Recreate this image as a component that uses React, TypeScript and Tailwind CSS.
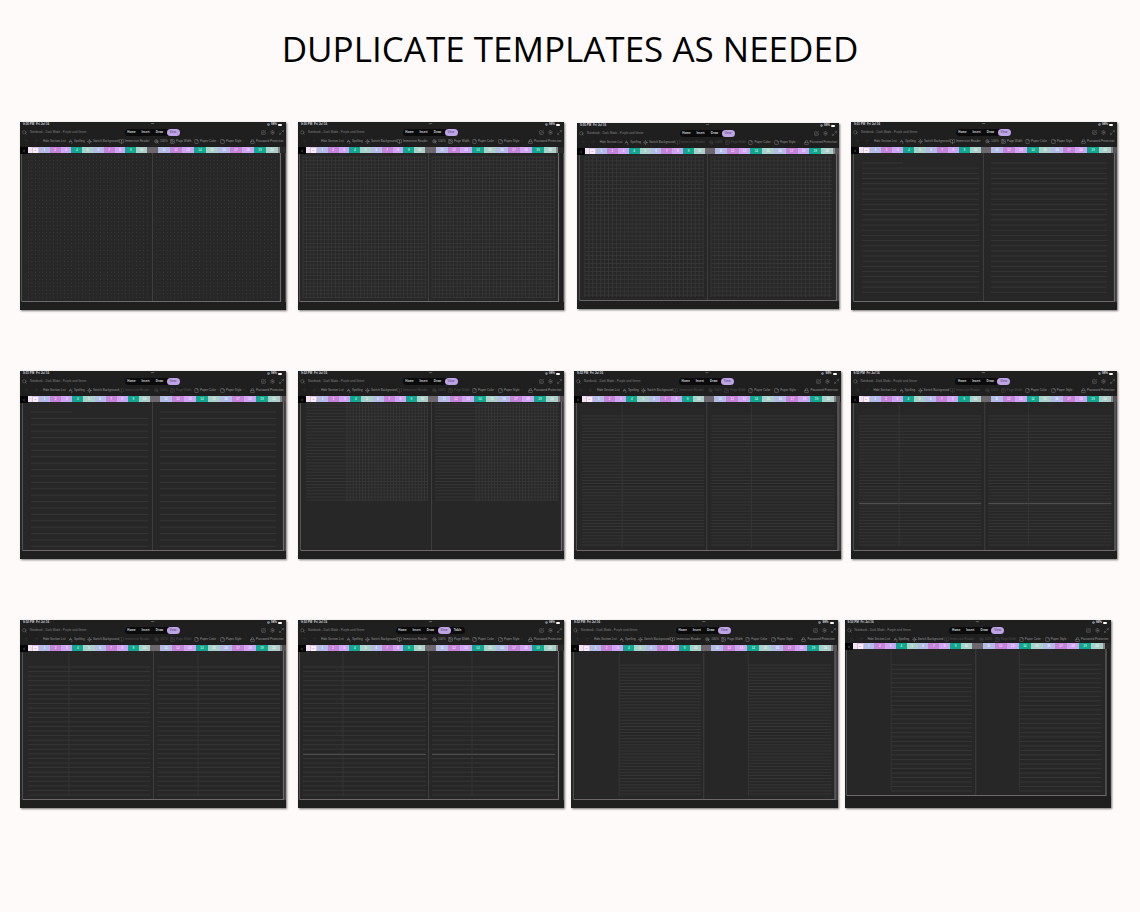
import {
  BookOpen,
  ChevronDown,
  ChevronLeft,
  File,
  Image,
  Lock,
  Maximize2,
  Redo2,
  Search,
  Settings,
  SpellCheck,
  SquarePen,
  StickyNote,
  Sun,
  Undo2,
  Wifi,
  ZoomIn,
} from 'lucide-react'
import clsx from 'clsx'

type Kind = 'dots' | 'grid' | 'lines'

interface Paper {
  kind: Kind
  // horizontal extent of the ruling on the left and right page
  pages: [number, number][]
  top: number
  bottom: number
  step: number
  // x positions of vertical rules
  rules?: number[]
  // x where the vertical grid lines begin, per page
  gridFrom?: number[]
  titleLine?: boolean
  summaryLine?: number
  spine: number
}

interface Template {
  name: string
  time: string
  paper: Paper
  inset?: boolean
  dimmed?: boolean
  small?: boolean
  raised?: boolean
  tableTab?: boolean
}

const INSET_PAGES: [number, number][] = [[5, 128], [134, 257]]
const WIDE_PAGES: [number, number][] = [[8, 130], [137, 260]]
const LINED_PAGES: [number, number][] = [[11, 128], [140, 256]]

const ROWS: { className: string; pairClassName: string; templates: Template[] }[] = [
  {
    className: 'grid-cols-[544fr_540fr] gap-[13px] pr-[23px]',
    pairClassName: 'grid-cols-[262fr_266fr] gap-3',
    templates: [
      {
        name: 'Dot grid',
        time: '9:50 PM',
        inset: true,
        paper: { kind: 'dots', pages: [[8, 129], [136, 258]], top: 4, bottom: 145, step: 3.6, spine: 132.5 },
      },
      {
        name: 'Small grid',
        time: '9:50 PM',
        inset: true,
        paper: { kind: 'grid', pages: INSET_PAGES, top: 4, bottom: 145, step: 3.6, spine: 130.5 },
      },
      {
        name: 'Large grid',
        time: '9:50 PM',
        dimmed: true,
        small: true,
        paper: { kind: 'grid', pages: [[8, 129], [136, 259]], top: 3, bottom: 145, step: 4, spine: 132.5 },
      },
      {
        name: 'Narrow lines',
        time: '9:51 PM',
        paper: { kind: 'lines', pages: LINED_PAGES, top: 10, bottom: 141, step: 5.17, titleLine: true, spine: 132.5 },
      },
    ],
  },
  {
    className: 'grid-cols-[544fr_543fr] gap-[10px] pr-[23px]',
    pairClassName: 'grid-cols-2 gap-[10px]',
    templates: [
      {
        name: 'Wide lines',
        time: '9:51 PM',
        dimmed: true,
        paper: { kind: 'lines', pages: LINED_PAGES, top: 10, bottom: 146, step: 6.4, titleLine: true, spine: 132.5 },
      },
      {
        name: 'Half grid',
        time: '9:52 PM',
        dimmed: true,
        paper: {
          kind: 'grid',
          pages: [[8, 130], [137, 261]],
          top: 2,
          bottom: 99,
          step: 3.1,
          gridFrom: [49, 178],
          spine: 133.5,
        },
      },
      {
        name: 'Narrow columns',
        time: '9:52 PM',
        dimmed: true,
        paper: { kind: 'lines', pages: WIDE_PAGES, top: 14, bottom: 146, step: 3.07, rules: [48, 177], spine: 132.5 },
      },
      {
        name: 'Narrow cornell',
        time: '9:52 PM',
        dimmed: true,
        paper: {
          kind: 'lines',
          pages: WIDE_PAGES,
          top: 14,
          bottom: 144,
          step: 3.07,
          rules: [48, 177],
          summaryLine: 101.5,
          spine: 133.5,
        },
      },
    ],
  },
  {
    className: 'grid-cols-[544fr_540fr] gap-[7px] pr-[29px]',
    pairClassName: 'grid-cols-2 gap-[7px]',
    templates: [
      {
        name: 'Wide columns',
        time: '9:52 PM',
        dimmed: true,
        paper: { kind: 'lines', pages: WIDE_PAGES, top: 16, bottom: 145, step: 4.57, rules: [49, 178], spine: 133.5 },
      },
      {
        name: 'Wide cornell',
        time: '9:52 PM',
        inset: true,
        tableTab: true,
        paper: {
          kind: 'lines',
          pages: INSET_PAGES,
          top: 16,
          bottom: 145,
          step: 4.57,
          rules: [45, 174],
          summaryLine: 103.5,
          spine: 130.5,
        },
      },
      {
        name: 'Narrow side notes',
        time: '9:52 PM',
        paper: { kind: 'lines', pages: [[48, 130], [177, 260]], top: 14, bottom: 145, step: 3.07, rules: [48, 177], spine: 132.5 },
      },
      {
        name: 'Wide side notes',
        time: '9:53 PM',
        inset: true,
        dimmed: true,
        raised: true,
        paper: { kind: 'lines', pages: [[46, 127], [174, 256]], top: 16, bottom: 144, step: 4.57, rules: [46, 174], spine: 130.5 },
      },
    ],
  },
]

const TAB_COLORS = ['bg-[#b3bce6]', 'bg-[#c683da]', 'bg-[#cea4f5]', 'bg-[#12a88f]', 'bg-[#abd0c9]']

function range(from: number, to: number, step: number) {
  const out: number[] = []
  for (let v = from; v <= to; v += step) out.push(v)
  return out
}

function PaperSheet({ paper, name, inset }: { paper: Paper; name: string; inset?: boolean }) {
  const { kind, pages, top, bottom, step, rules = [], gridFrom, titleLine, summaryLine, spine } = paper
  const edge = inset ? 260.5 : 263.5
  const left = inset ? 1.5 : 2.5
  const ys = range(top, bottom, step)

  return (
    <svg
      viewBox="0 0 266 149"
      preserveAspectRatio="none"
      className="block h-full w-full"
      role="img"
      aria-label={name}
    >
      <rect width="266" height="149" fill="#272727" />
      <rect x={edge} width={266 - edge} height="149" fill={inset ? '#1f1f1f' : '#3a393a'} />
      {pages.map(([x1, x2], i) => (
        <g key={i}>
          {kind === 'dots' &&
            ys.map((y) => (
              <line key={y} x1={x1} x2={x2} y1={y} y2={y} stroke="#4a4a4a" strokeWidth="0.8" strokeDasharray="0.8 2.8" />
            ))}
          {kind !== 'dots' &&
            ys.map((y, n) => (
              <line
                key={y}
                x1={x1}
                x2={titleLine && n === 0 && i === 0 ? x1 + 41 : x2}
                y1={y}
                y2={y}
                stroke="#3a3a3a"
                strokeWidth="0.8"
              />
            ))}
          {kind === 'grid' &&
            range(gridFrom ? gridFrom[i] : x1, x2, step).map((x) => (
              <line key={x} x1={x} x2={x} y1={top} y2={bottom} stroke="#3a3a3a" strokeWidth="0.8" />
            ))}
          {summaryLine && (
            <line x1={x1} x2={x2} y1={summaryLine} y2={summaryLine} stroke="#545454" strokeWidth="0.9" />
          )}
        </g>
      ))}
      {rules.map((x) => (
        <line key={x} x1={x} x2={x} y1="2" y2={bottom} stroke="#383838" strokeWidth="0.8" />
      ))}
      <line x1={spine} x2={spine} y1="0" y2="148" stroke="#3e3e3e" strokeWidth="1" />
      <line x1={left} x2={left} y1="0" y2="148" stroke="#504e50" strokeWidth="1" />
      <line x1={edge} x2={edge} y1="0" y2="149" stroke="#6c686c" strokeWidth="1.2" />
      <line x1={left} x2={edge} y1="148.5" y2="148.5" stroke="#6c686c" strokeWidth="1" />
      <line x1="265.5" x2="265.5" y1="0" y2="149" stroke="#4c4a4c" strokeWidth="1" />
    </svg>
  )
}

function StatusBar({ time }: { time: string }) {
  return (
    <div className="grid h-[5px] grid-cols-[1fr_auto_1fr] items-center pr-1 pl-[3px] font-bold text-gray-300">
      <span>{time} &nbsp;Fri Jul 16</span>
      <span className="text-[#8a8a8a]">•••</span>
      <span className="flex items-center justify-end gap-px">
        <Wifi size={3} strokeWidth={4} />
        98%
        <span className="h-[2px] w-1 rounded-full bg-white" />
      </span>
    </div>
  )
}

function TitleBar({ tableTab }: { tableTab?: boolean }) {
  const tabs = ['Home', 'Insert', 'Draw', 'View']
  if (tableTab) tabs.push('Table')

  return (
    <div className="grid h-[10px] grid-cols-[1fr_auto_1fr] items-center pr-[2px] text-[#808080]">
      <div className="flex items-center gap-[3px] pl-[2px]">
        <Search size={5} />
        <span>Notebook - Dark Mode - Purple and Green</span>
      </div>
      <nav className="flex h-[7px] items-center rounded-full bg-[#0b0b0b] font-bold text-gray-300">
        {tabs.map((tab) => (
          <button
            key={tab}
            type="button"
            className={clsx(
              'flex h-[7px] items-center justify-center rounded-full',
              tab === 'View' ? 'w-[13px] bg-[#bea4e6] text-[#6d578f]' : 'w-[14px]',
            )}
          >
            {tab}
          </button>
        ))}
      </nav>
      <div className="flex items-center justify-end gap-1">
        <SquarePen size={5} />
        <Settings size={5} />
        <Maximize2 size={5} />
      </div>
    </div>
  )
}

function Toolbar({ dimmed }: { dimmed?: boolean }) {
  const items = [
    { label: 'Hide Section List' },
    { label: 'Spelling', icon: SpellCheck },
    { label: 'Switch Background', icon: Sun },
    { label: 'Immersive Reader', icon: BookOpen, dim: dimmed },
    { label: '100%', icon: ZoomIn, dim: dimmed },
    { label: 'Page Width', icon: Image, dim: dimmed },
    { label: 'Paper Color', icon: File, more: true },
    { label: 'Paper Style', icon: StickyNote, more: true },
    { label: 'Password Protection', icon: Lock },
  ]

  return (
    <div className="grid h-2 grid-cols-[9fr_9fr_25fr_19fr_32fr_35fr_16fr_24fr_26fr_30fr_36fr] items-center pl-[5px] text-[#959595]">
      <Undo2 size={4} className="text-[#444]" />
      <Redo2 size={4} className="text-[#444]" />
      {items.map(({ label, icon: Icon, dim, more }) => (
        <button
          key={label}
          type="button"
          className={clsx('flex min-w-0 items-center gap-px whitespace-nowrap', dim && 'text-[#505050]')}
        >
          {Icon && <Icon size={5} className="shrink-0" />}
          <span>{label}</span>
          {more && <ChevronDown size={2} className="shrink-0" />}
        </button>
      ))}
    </div>
  )
}

function TabGroup({ start }: { start: number }) {
  return (
    <div className="grid grid-cols-10">
      {Array.from({ length: 10 }, (_, i) => (
        <button
          key={i}
          type="button"
          className={clsx('flex items-center justify-center text-white', TAB_COLORS[i % 5])}
        >
          {start + i}
        </button>
      ))}
    </div>
  )
}

function TabStrip({ inset }: { inset?: boolean }) {
  return (
    <div
      className={clsx(
        'grid h-[6px]',
        inset
          ? 'grid-cols-[8px_4px_7px_108fr_11px_120fr_8px]'
          : 'grid-cols-[8px_4px_7px_111fr_10px_120fr_6px]',
      )}
    >
      <button type="button" aria-label="Back" className="z-10 flex h-[7px] items-center justify-center bg-black text-white">
        <ChevronLeft size={4} />
      </button>
      <span className="bg-[#f0e4f4]" />
      <span className="flex items-center justify-center border border-[#dfbde4] bg-[#faeefa] text-[#b57cc0]">≡</span>
      <TabGroup start={1} />
      <span className="bg-[#6e676d]" />
      <TabGroup start={11} />
      <span className={clsx('border-l-2 border-[#8a858a]', inset ? 'bg-[#2a2a2a]' : 'bg-[#555155]')} />
    </div>
  )
}

function NotebookScreen({ template }: { template: Template }) {
  const { name, time, paper, inset, dimmed, small, raised, tableTab } = template

  return (
    <article className="min-w-0 overflow-hidden bg-[#1f1f1f] text-[3px] leading-none shadow-[1px_1px_2px_rgba(0,0,0,0.55)]">
      <StatusBar time={time} />
      <TitleBar tableTab={tableTab} />
      <Toolbar dimmed={dimmed} />
      <div className={raised ? 'pb-3' : 'pt-[2px] pb-2'}>
        <TabStrip inset={inset} />
        <div className={small || raised ? 'h-[147px]' : 'h-[149px]'}>
          <PaperSheet paper={paper} name={name} inset={inset} />
        </div>
      </div>
    </article>
  )
}

export default function App() {
  return (
    <main className="min-h-screen bg-[#fffafa] font-['Liberation_Sans',sans-serif]">
      <h1 className="pt-6 text-center font-['Open_Sans',sans-serif] text-[35px] leading-[50px] text-black">
        DUPLICATE TEMPLATES AS NEEDED
      </h1>
      <div className="flex flex-col gap-[61px] pt-12 pb-[103px] pl-5">
        {ROWS.map((row, i) => (
          <section key={i} className={clsx('grid', row.className)}>
            <div className="grid grid-cols-2 items-center gap-3">
              {row.templates.slice(0, 2).map((t) => (
                <NotebookScreen key={t.name} template={t} />
              ))}
            </div>
            <div className={clsx('grid items-center', row.pairClassName)}>
              {row.templates.slice(2).map((t) => (
                <NotebookScreen key={t.name} template={t} />
              ))}
            </div>
          </section>
        ))}
      </div>
    </main>
  )
}
